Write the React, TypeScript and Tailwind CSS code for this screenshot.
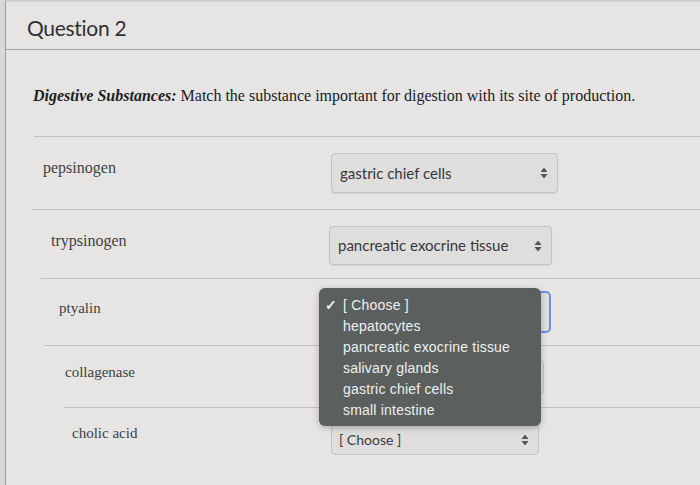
import React from "react";

function Arrows({ color = "#555" }: { color?: string }) {
  return (
    <svg width="8" height="12" viewBox="0 0 8 12" className="shrink-0">
      <path d="M4 0.5 L7.5 5 H0.5 Z" fill={color} />
      <path d="M4 11.5 L7.5 7 H0.5 Z" fill={color} />
    </svg>
  );
}

export default function App() {
  const serif = { fontFamily: '"Liberation Serif", "Times New Roman", serif' };
  const lato = { fontFamily: 'Lato, "Open Sans", sans-serif' };
  const sans = { fontFamily: '"Liberation Sans", Arial, sans-serif' };

  return (
    <div className="relative w-[700px] h-[485px] overflow-hidden bg-[#dad8d6]">
      <div className="ml-[5px] h-full border-l border-t-[2px] border-[#9c9a98] border-t-[#cfcdcb] bg-[#e6e5e3] flex flex-col">
        {/* Header */}
        <div className="h-[48px] shrink-0 border-b border-[#a3a19f] flex items-center pl-[21px] pt-[4px]">
          <span className="text-[21px] text-[#2f3034] tracking-[-0.3px]" style={lato}>
            Question 2
          </span>
        </div>

        {/* Question text */}
        <div className="h-[86px] shrink-0 pl-[27px] pt-[37px]">
          <p className="text-[16px] leading-[18px] text-[#202125]" style={serif}>
            <b className="italic">Digestive Substances:</b> Match the substance important for digestion with its site of production.
          </p>
        </div>
        <div className="h-px ml-[28px] bg-[#c3c1bf] shrink-0" />

        {/* Row 1 */}
        <div className="h-[72px] shrink-0 flex">
          <div className="w-[325px] pl-[37px] pt-[21px] text-[16px] leading-[20px] text-[#3e3f44]" style={serif}>
            pepsinogen
          </div>
          <div className="mt-[16px] w-[227px] h-[40px] rounded-[4px] border border-[#c4c3c1] bg-[#dfdedc] shadow-[0_1px_1px_rgba(0,0,0,0.08)] flex items-center justify-between pl-[8px] pr-[9px]">
            <span className="text-[15px] text-[#36373b]" style={lato}>gastric chief cells</span>
            <Arrows />
          </div>
        </div>
        <div className="h-px ml-[26px] bg-[#c3c1bf] shrink-0" />

        {/* Row 2 */}
        <div className="h-[68px] shrink-0 flex">
          <div className="w-[323px] pl-[45px] pt-[21px] text-[16px] leading-[20px] text-[#3e3f44]" style={serif}>
            trypsinogen
          </div>
          <div className="mt-[16px] w-[223px] h-[39px] rounded-[4px] border border-[#c4c3c1] bg-[#dfdedc] shadow-[0_1px_1px_rgba(0,0,0,0.08)] flex items-center justify-between pl-[8px] pr-[9px]">
            <span className="text-[15px] text-[#36373b]" style={lato}>pancreatic exocrine tissue</span>
            <Arrows />
          </div>
        </div>
        <div className="h-px ml-[35px] bg-[#c3c1bf] shrink-0" />

        {/* Row 3 */}
        <div className="h-[66px] shrink-0 flex">
          <div className="w-[323px] pl-[53px] pt-[19px] text-[15px] leading-[20px] text-[#3e3f44]" style={serif}>
            ptyalin
          </div>
          <div className="mt-[12px] w-[222px] h-[42px] rounded-[5px] border-2 border-[#6f8fe0] bg-[#dfdedc] flex items-center justify-end pr-[7px]">
            <Arrows />
          </div>
        </div>
        <div className="h-px ml-[38px] bg-[#c3c1bf] shrink-0" />

        {/* Row 4 */}
        <div className="h-[61px] shrink-0 flex">
          <div className="w-[325px] pl-[59px] pt-[16px] text-[15px] leading-[20px] text-[#3e3f44]" style={serif}>
            collagenase
          </div>
          <div className="mt-[14px] w-[213px] h-[35px] rounded-[4px] border border-[#c4c3c1] bg-[#dfdedc] flex items-center justify-end pr-[7px]">
            <Arrows />
          </div>
        </div>
        <div className="h-px ml-[58px] bg-[#c3c1bf] shrink-0" />

        {/* Row 5 */}
        <div className="flex-1 flex">
          <div className="w-[325px] pl-[66px] pt-[15px] text-[15px] leading-[20px] text-[#3e3f44]" style={serif}>
            cholic acid
          </div>
          <div className="mt-[16px] w-[208px] h-[31px] rounded-[4px] border border-[#c4c3c1] bg-[#dfdedc] flex items-center justify-between pl-[7px] pr-[9px]">
            <span className="text-[14px] text-[#3a3b3f]" style={lato}>[ Choose ]</span>
            <Arrows />
          </div>
        </div>
      </div>

      {/* Open dropdown menu */}
      <div
        className="absolute left-[319px] top-[288px] w-[222px] h-[138px] rounded-[6px] bg-[#5b5f5e] shadow-[0_2px_6px_rgba(0,0,0,0.25)] pt-[7px]"
        style={sans}
      >
        <ul className="text-[14px] leading-[21px] text-[#eef0ef] tracking-[0.2px]">
          <li className="flex items-center">
            <span className="w-[24px] pl-[6px] text-[14px] font-bold">✓</span>
            <span>[ Choose ]</span>
          </li>
          <li className="pl-[24px]">hepatocytes</li>
          <li className="pl-[24px]">pancreatic exocrine tissue</li>
          <li className="pl-[24px]">salivary glands</li>
          <li className="pl-[24px]">gastric chief cells</li>
          <li className="pl-[24px]">small intestine</li>
        </ul>
      </div>
    </div>
  );
}
